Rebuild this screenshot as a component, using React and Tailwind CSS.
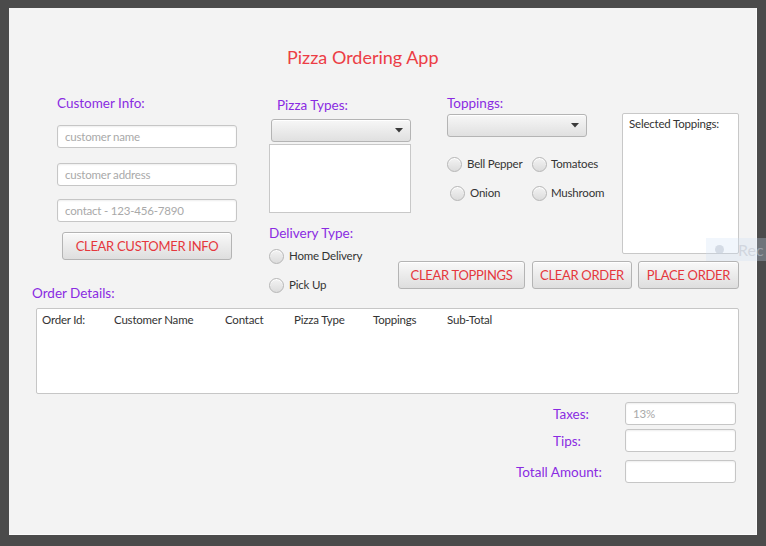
import React from "react";

function TextField({ placeholder, className = "" }) {
  return (
    <div
      className={`h-[23px] bg-white border border-[#c6c6c6] rounded-[3px] shadow-[inset_0_1px_2px_rgba(0,0,0,0.07)] flex items-center pl-[7px] text-[11.5px] tracking-[-0.2px] text-[#a9a9a9] whitespace-nowrap ${className}`}
    >
      {placeholder}
    </div>
  );
}

function Button({ children, className = "" }) {
  return (
    <div
      className={`h-[28px] rounded-[3px] border border-[#b4b4b4] bg-linear-to-b from-[#f9f9f9] to-[#dedede] shadow-[inset_0_1px_0_#ffffff] flex items-center justify-center text-[13px] tracking-[-0.3px] leading-[20px] text-[#e5373d] whitespace-nowrap ${className}`}
    >
      {children}
    </div>
  );
}

function Combo({ className = "" }) {
  return (
    <div
      className={`h-[23px] rounded-[3px] border border-[#b4b4b4] bg-linear-to-b from-[#f7f7f7] to-[#e0e0e0] shadow-[inset_0_1px_0_#ffffff] flex items-center justify-end pr-[7px] ${className}`}
    >
      <svg width="8" height="5" viewBox="0 0 8 5">
        <path d="M0 0 L8 0 L4 4.5 Z" fill="#3a3a3a" />
      </svg>
    </div>
  );
}

function Radio({ label, gap = "ml-[5px]", className = "" }) {
  return (
    <div className={`flex items-center h-[16px] ${className}`}>
      <span className="w-[15px] h-[15px] rounded-full border border-[#b6b6b6] bg-linear-to-b from-[#f3f3f3] to-[#dcdcdc] shadow-[inset_0_1px_0_#ffffff] shrink-0" />
      <span className={`${gap} text-[11.5px] tracking-[-0.2px] leading-[16px] text-[#333333] whitespace-nowrap`}>{label}</span>
    </div>
  );
}

function Label({ children, className = "" }) {
  return (
    <div className={`text-[13.5px] leading-[20px] text-[#8a2be2] whitespace-nowrap ${className}`}>{children}</div>
  );
}

export default function App() {
  return (
    <div className="relative w-[766px] h-[546px] bg-[#4b4b4b] pt-[8px] pl-[9px] font-['Lato',sans-serif] overflow-hidden">
      <div className="w-[748px] h-[527px] bg-[#f3f3f3] border-r border-b border-[#fbfbfb]">
        <h1 className="pt-[37px] pl-[278px] text-[18px] leading-[24px] text-[#ec3d45] whitespace-nowrap">
          Pizza Ordering App
        </h1>

        {/* top section */}
        <div className="flex items-start">
          {/* customer column */}
          <div className="ml-[23px] flex flex-col">
            <div className="pl-[25px] w-[205px] flex flex-col">
              <Label className="mt-[24px]">Customer Info:</Label>
              <TextField placeholder="customer name" className="mt-[12px] w-[180px]" />
              <TextField placeholder="customer address" className="mt-[15px] w-[180px]" />
              <TextField placeholder="contact - 123-456-7890" className="mt-[13px] w-[180px]" />
              <Button className="mt-[10px] ml-[5px] w-[170px]">CLEAR CUSTOMER INFO</Button>
            </div>
            <Label className="mt-[23px]">Order Details:</Label>
          </div>

          {/* pizza column */}
          <div className="ml-[32px] w-[142px] flex flex-col">
            <Label className="mt-[26px] ml-[8px]">Pizza Types:</Label>
            <Combo className="mt-[4px] ml-[2px] w-[140px]" />
            <div className="mt-[2px] w-[142px] h-[69px] bg-white border border-[#c8c8c8]" />
            <Label className="mt-[10px]">Delivery Type:</Label>
            <Radio label="Home Delivery" className="mt-[5px]" />
            <Radio label="Pick Up" className="mt-[13px]" />
          </div>

          {/* toppings column */}
          <div className="ml-[36px] flex flex-col">
            <div className="flex items-start">
              <div className="w-[175px] flex flex-col">
                <Label className="mt-[24px]">Toppings:</Label>
                <Combo className="mt-[1px] w-[140px]" />
                <div className="mt-[19px] flex">
                  <Radio label="Bell Pepper" gap="ml-[5px]" className="w-[85px]" />
                  <Radio label="Tomatoes" gap="ml-[4px]" />
                </div>
                <div className="mt-[13px] flex">
                  <Radio label="Onion" gap="ml-[5px]" className="w-[82px] ml-[3px]" />
                  <Radio label="Mushroom" gap="ml-[4px]" />
                </div>
              </div>
              <div className="mt-[44px] w-[117px] h-[141px] bg-white border border-[#c8c8c8] rounded-[2px] pl-[6px] pt-[2px] text-[11.5px] tracking-[-0.2px] leading-[16px] text-[#333333] whitespace-nowrap">
                Selected Toppings:
              </div>
            </div>
            <div className="mt-[7px] ml-[-49px] flex">
              <Button className="w-[127px]">CLEAR TOPPINGS</Button>
              <Button className="ml-[7px] w-[100px]">CLEAR ORDER</Button>
              <Button className="ml-[6px] w-[101px]">PLACE ORDER</Button>
            </div>
          </div>
        </div>

        {/* order table */}
        <div className="mt-[5px] ml-[27px] w-[703px] h-[86px] bg-white border border-[#c6c6c6] rounded-[2px] pt-[3px] pl-[5px] flex text-[11.5px] tracking-[-0.2px] leading-[16px] text-[#333333] whitespace-nowrap">
          <div className="w-[72px]">Order Id:</div>
          <div className="w-[111px]">Customer Name</div>
          <div className="w-[69px]">Contact</div>
          <div className="w-[79px]">Pizza Type</div>
          <div className="w-[74px]">Toppings</div>
          <div>Sub-Total</div>
        </div>

        {/* totals */}
        <div className="ml-[507px] flex flex-col">
          <div className="mt-[8px] flex items-center">
            <div className="w-[109px] pl-[37px]">
              <Label>Taxes:</Label>
            </div>
            <TextField placeholder="13%" className="w-[111px]" />
          </div>
          <div className="mt-[4px] flex items-center">
            <div className="w-[109px] pl-[37px]">
              <Label>Tips:</Label>
            </div>
            <TextField placeholder="" className="w-[111px]" />
          </div>
          <div className="mt-[8px] flex items-center">
            <div className="w-[109px]">
              <Label>Totall Amount:</Label>
            </div>
            <TextField placeholder="" className="w-[111px]" />
          </div>
        </div>
      </div>

      {/* recorder overlay */}
      <div className="absolute left-[706px] top-[238px] w-[70px] h-[23px] bg-[rgba(205,222,245,0.28)] flex items-center">
        <span className="ml-[9px] w-[9px] h-[9px] rounded-full bg-[rgba(200,208,220,0.7)]" />
        <span className="ml-[14px] text-[16px] leading-[20px] text-[rgba(190,195,205,0.55)]">Rec</span>
      </div>
    </div>
  );
}
